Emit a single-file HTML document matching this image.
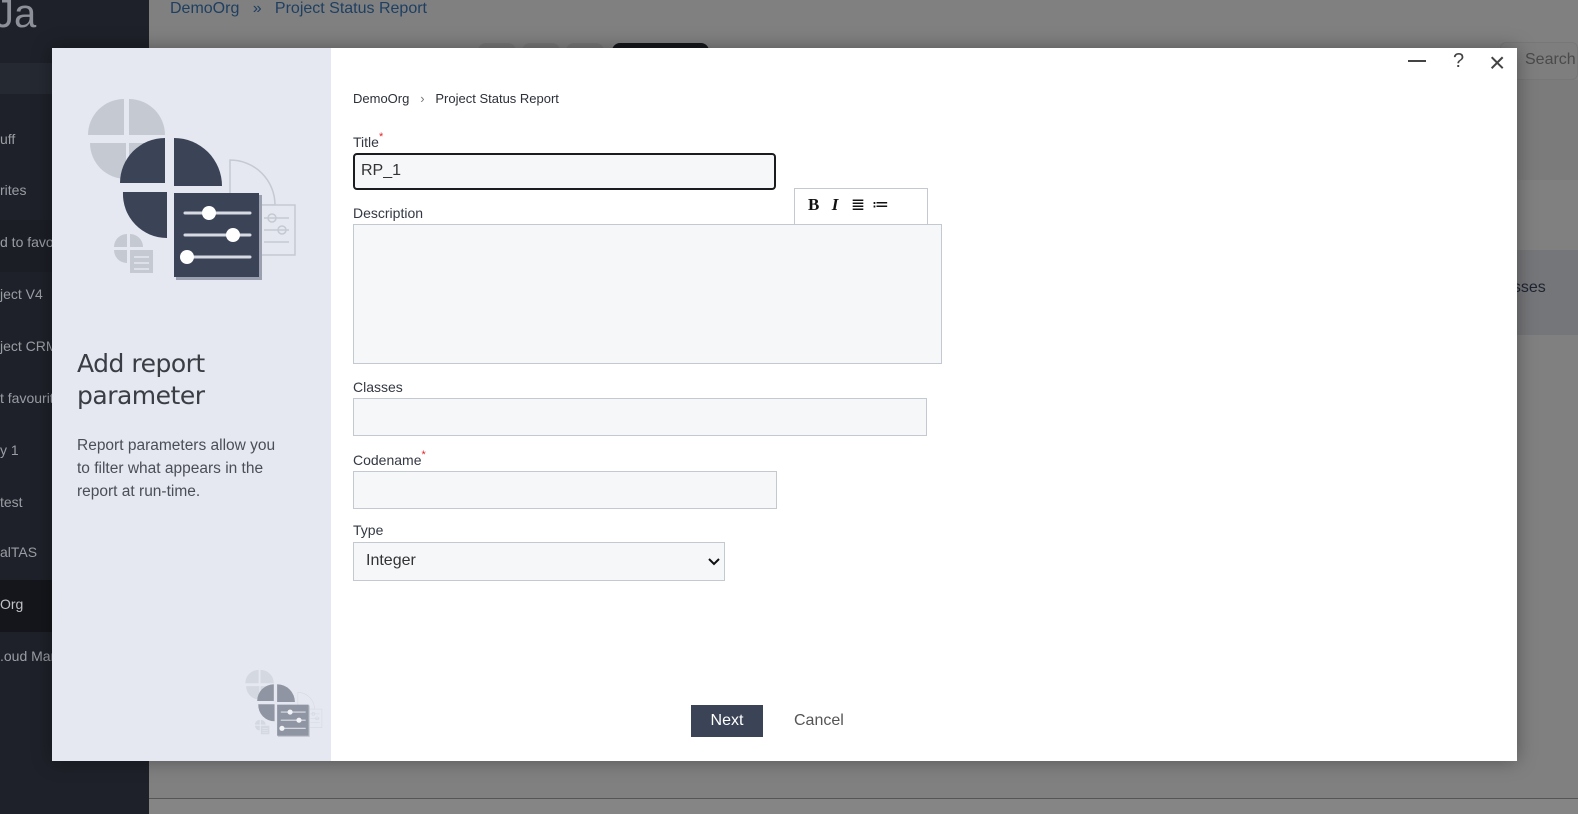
<!DOCTYPE html>
<html><head><meta charset="utf-8"><style>
*{box-sizing:border-box;margin:0;padding:0}
body{width:1578px;height:814px;overflow:hidden;position:relative;background:#808080;font-family:"Liberation Sans",sans-serif}
.sb{position:absolute;left:0;top:0;width:149px;height:814px;background:#1e2129}
.sb div{position:absolute;left:0;width:149px;color:#9a9da3;font-size:14px}
.abs{position:absolute}
.modal{position:absolute;left:52px;top:48px;width:1465px;height:713px;background:#fff;box-shadow:0 0 18px rgba(0,0,0,.35)}
.lp{position:absolute;left:0;top:0;width:279px;height:713px;background:#e5e8f0}
.lbl{position:absolute;left:301px;font-size:14px;color:#333842}
.req{color:#e3262b;font-size:11px;vertical-align:top;position:relative;top:-3px}
.inp{position:absolute;left:301px;background:#f6f7f9;border:1px solid #c4c8d1}
</style></head><body>
<div class="sb">
<div style="top:-8px;height:48px;font-size:40px;color:#8d9098;left:-6px;font-weight:300">Ja</div>
<div style="top:63px;height:31px;background:#252932"></div>
<div style="top:131px">uff</div>
<div style="top:182px">rites</div>
<div style="top:220px;height:52px;background:#1b1e25"></div>
<div style="top:234px">d to favou</div>
<div style="top:286px">ject V4</div>
<div style="top:338px">ject CRM</div>
<div style="top:390px">t favourit</div>
<div style="top:442px">y 1</div>
<div style="top:494px">test</div>
<div style="top:544px">alTAS</div>
<div style="top:580px;height:52px;background:#14161b"></div>
<div style="top:596px;color:#c0c2c7">Org</div>
<div style="top:648px">.oud Mar</div>
</div>
<div class="abs" style="left:170px;top:0;font-size:16px;color:#1e3f62">DemoOrg &nbsp;&nbsp;»&nbsp;&nbsp; Project Status Report</div>
<div class="abs" style="left:478px;top:43px;width:38px;height:10px;background:#777;border-radius:8px 8px 0 0"></div>
<div class="abs" style="left:522px;top:43px;width:38px;height:10px;background:#777;border-radius:8px 8px 0 0"></div>
<div class="abs" style="left:566px;top:43px;width:38px;height:10px;background:#777;border-radius:8px 8px 0 0"></div>
<div class="abs" style="left:612px;top:43px;width:97px;height:10px;background:#15171c;border-radius:8px 8px 0 0"></div>
<div class="abs" style="left:1500px;top:42px;width:78px;height:38px;background:#7e7e7e;border:1px solid #777;border-radius:6px"></div>
<div class="abs" style="left:1525px;top:51px;font-size:16px;color:#4a4a4a">Search</div>
<div class="abs" style="left:1517px;top:80px;width:61px;height:100px;background:#7b7b7b"></div>
<div class="abs" style="left:1517px;top:250px;width:61px;height:85px;background:#757679"></div>
<div class="abs" style="left:1504px;top:279px;font-size:16px;color:#1e2430">asses</div>
<div class="abs" style="left:149px;top:798px;width:1429px;height:1px;background:#555"></div>
<div class="abs" style="left:149px;top:799px;width:1429px;height:15px;background:#858585"></div>

<div class="modal">
<div class="lp">
<svg class="abs" style="left:0;top:0" width="279" height="713" viewBox="0 0 279 713">
<defs><g id="ill">
<g fill="#c5c9d2">
<path d="M72 87 H36 A36 36 0 0 1 72 51Z"/>
<path d="M77 87 V51 A36 36 0 0 1 113 87Z"/>
<path d="M74 95 V131 A36 36 0 0 1 38 95Z"/>
<path d="M77 95 H113 A36 36 0 0 1 77 131Z"/>
</g>
<g fill="none" stroke="#c5c9d2" stroke-width="1.5">
<path d="M178 157 V112 A45 45 0 0 1 223 157Z"/>
<rect x="206" y="157" width="37" height="50" fill="#e5e8f0"/>
<path d="M212 170h25M212 182h25M212 194h25"/>
<circle cx="220" cy="170" r="4"/><circle cx="230" cy="182" r="4"/>
</g>
<g fill="#3b4457">
<path d="M113 135 H68 A45 45 0 0 1 113 90Z"/>
<path d="M122 138 V90 A48 48 0 0 1 170 138Z"/>
<path d="M115 144 V190 A44 44 0 0 1 71 144Z"/>
</g>
<rect x="124" y="147" width="86" height="85" fill="#9aa0ad"/>
<rect x="122" y="145" width="85" height="84" fill="#3b4457"/>
<g stroke="#d7dae2" stroke-width="3" stroke-linecap="round"><path d="M133 165h65M133 187h65M133 209h65"/></g>
<g fill="#fff"><circle cx="157" cy="165" r="7"/><circle cx="181" cy="187" r="7"/><circle cx="135" cy="209" r="7"/></g>
<g fill="#c5c9d2"><path d="M75 199 H62 A13 13 0 0 1 75 186Z"/><path d="M78 199 V186 A13 13 0 0 1 91 199Z"/><path d="M75 202 V215 A13 13 0 0 1 62 202Z"/>
<rect x="78" y="202" width="23" height="23"/></g>
<g stroke="#e5e8f0" stroke-width="1.5"><path d="M82 209h15M82 215h15M82 221h15"/></g>
</g></defs>
<use href="#ill"/>
<g opacity="0.5"><use href="#ill" transform="translate(180,603) scale(0.37)"/></g>
</svg>
<div class="abs" style="left:25px;top:300px;font-size:25px;line-height:32px;color:#3a3d44;font-family:'DejaVu Sans',sans-serif;letter-spacing:-0.5px">Add report<br>parameter</div>
<div class="abs" style="left:25px;top:386px;font-size:15.5px;line-height:23px;color:#4a4e57;width:250px;white-space:nowrap">Report parameters allow you<br>to filter what appears in the<br>report at run-time.</div>
</div>
<div class="abs" style="left:1356px;top:12px;width:18px;height:2px;background:#444"></div>
<div class="abs" style="left:1401px;top:2px;font-size:20px;color:#444">?</div>
<div class="abs" style="left:1437px;top:-1px;font-size:28px;color:#444;font-weight:300">×</div>
<div class="abs" style="left:301px;top:43px;font-size:13px;color:#2c3039">DemoOrg &nbsp;&nbsp;<span style="color:#777">›</span>&nbsp;&nbsp; Project Status Report</div>
<div class="lbl" style="top:86px">Title<span class="req">*</span></div>
<div class="inp" style="top:105px;width:423px;height:37px;border:2px solid #1a1c20;border-radius:4px;padding:7px 6px;font-size:16px;color:#333">RP_1</div>
<div class="lbl" style="top:157px">Description</div>
<div class="abs" style="left:742px;top:140px;width:134px;height:36px;background:#fff;border:1px solid #c4c8d1;border-bottom:none;font-size:17px;padding:6px 0 0 13px;color:#111;letter-spacing:1px"><b style="font-family:'Liberation Serif',serif">B</b>&nbsp;&nbsp;<i style="font-family:'Liberation Serif',serif;font-weight:bold">I</i>&nbsp; <span style="font-size:17px">≣ ≔</span></div>
<div class="inp" style="top:176px;width:589px;height:140px"></div>
<div class="lbl" style="top:331px">Classes</div>
<div class="inp" style="top:350px;width:574px;height:38px"></div>
<div class="lbl" style="top:404px">Codename<span class="req">*</span></div>
<div class="inp" style="top:423px;width:424px;height:38px"></div>
<div class="lbl" style="top:474px">Type</div>
<div class="inp" style="top:494px;width:372px;height:39px;padding:9px 12px;font-size:16px;color:#333">Integer
<svg class="abs" style="left:354px;top:15px" width="12" height="8"><path d="M1 1l5 5 5-5" stroke="#111" stroke-width="2" fill="none"/></svg></div>
<div class="abs" style="left:639px;top:657px;width:72px;height:32px;background:#3b4457;color:#fff;font-size:16px;text-align:center;line-height:32px">Next</div>
<div class="abs" style="left:742px;top:664px;font-size:16px;color:#555">Cancel</div>
</div>
</body></html>
